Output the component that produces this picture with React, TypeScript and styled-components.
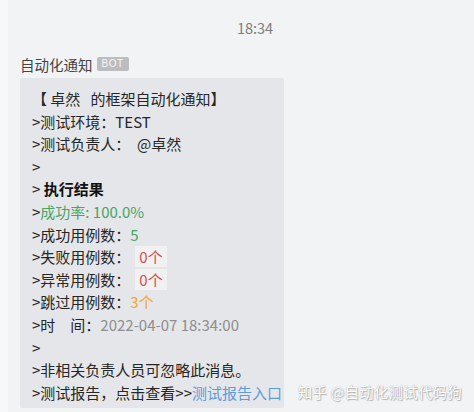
import React from 'react';
import styled, { createGlobalStyle } from 'styled-components';

const GlobalStyle = createGlobalStyle`
  html, body {
    margin: 0;
    padding: 0;
    background: #f3f4f6;
  }
  body {
    font-family: "Noto Sans CJK SC", "Noto Sans", sans-serif;
  }
`;

const Page = styled.div`
  position: relative;
  width: 474px;
  height: 412px;
  overflow: hidden;
  background: #f2f3f5;
  border-left: 8px solid #f7f8fa;
  box-sizing: border-box;
`;

const TimeRow = styled.div`
  display: flex;
  justify-content: center;
  padding: 17px 0 0 28px;
  height: 22px;
  font-size: 14.5px;
  line-height: 22px;
  color: #7d7d7d;
`;

const Sender = styled.div`
  display: flex;
  align-items: center;
  gap: 4px;
  margin: 14px 0 0 12px;
  height: 22px;
  font-size: 14.5px;
  color: #444;
`;

const Badge = styled.span`
  background: #bdbdbf;
  color: #f6f6f6;
  font-family: "Liberation Sans", Arial, sans-serif;
  font-size: 10px;
  line-height: 14px;
  padding: 0 5px;
  border-radius: 2px;
  letter-spacing: 0.5px;
`;

const Bubble = styled.div`
  margin: 3px 0 0 12px;
  width: 264px;
  height: 330px;
  box-sizing: border-box;
  background: #e5e6e9;
  padding: 10px 0 0 12px;
  border-radius: 2px;
  font-size: 15px;
  line-height: 22.6px;
  color: #262626;
  white-space: pre;
`;

const Line = styled.div`
  height: 22.6px;
`;

const Strong = styled.b`
  font-weight: 700;
  color: #111;
`;

const Tone = styled.span<{ $color: string }>`
  color: ${p => p.$color};
`;

const Code = styled.span<{ $color: string }>`
  display: inline-block;
  margin-left: 5px;
  padding: 0 4px;
  line-height: 21px;
  background: #f1f1f2;
  color: ${p => p.$color};
`;

const Link = styled.span`
  color: #5b9cd9;
`;

const Watermark = styled.div`
  position: absolute;
  right: 12px;
  bottom: 10px;
  font-size: 14.5px;
  color: #ffffff;
  text-shadow: 0 0 1px #9a9a9a, 1px 1px 1px #b5b5b5;
  letter-spacing: 0.2px;
`;

const GREEN = '#48a565';
const RED = '#d2504c';
const ORANGE = '#f1a736';
const GRAY = '#8e8e8e';

export default function App() {
  return (
    <>
      <GlobalStyle />
      <Page>
        <TimeRow>18:34</TimeRow>
        <Sender>
          自动化通知<Badge>BOT</Badge>
        </Sender>
        <Bubble>
          <Line>【 卓然   的框架自动化通知】</Line>
          <Line>&gt;测试环境：TEST</Line>
          <Line>&gt;测试负责人：  @卓然</Line>
          <Line>&gt;</Line>
          <Line>&gt; <Strong>执行结果</Strong></Line>
          <Line>&gt;<Tone $color={GREEN}>成功率: 100.0%</Tone></Line>
          <Line>&gt;成功用例数：<Tone $color={GREEN}>5</Tone></Line>
          <Line>&gt;失败用例数：<Code $color={RED}>0个</Code></Line>
          <Line>&gt;异常用例数：<Code $color={RED}>0个</Code></Line>
          <Line>&gt;跳过用例数：<Tone $color={ORANGE}>3个</Tone></Line>
          <Line>&gt;时　间：<Tone $color={GRAY}>2022-04-07 18:34:00</Tone></Line>
          <Line>&gt;</Line>
          <Line>&gt;非相关负责人员可忽略此消息。</Line>
          <Line>&gt;测试报告，点击查看&gt;&gt;<Link>测试报告入口</Link></Line>
        </Bubble>
        <Watermark>知乎 @自动化测试代码狗</Watermark>
      </Page>
    </>
  );
}
